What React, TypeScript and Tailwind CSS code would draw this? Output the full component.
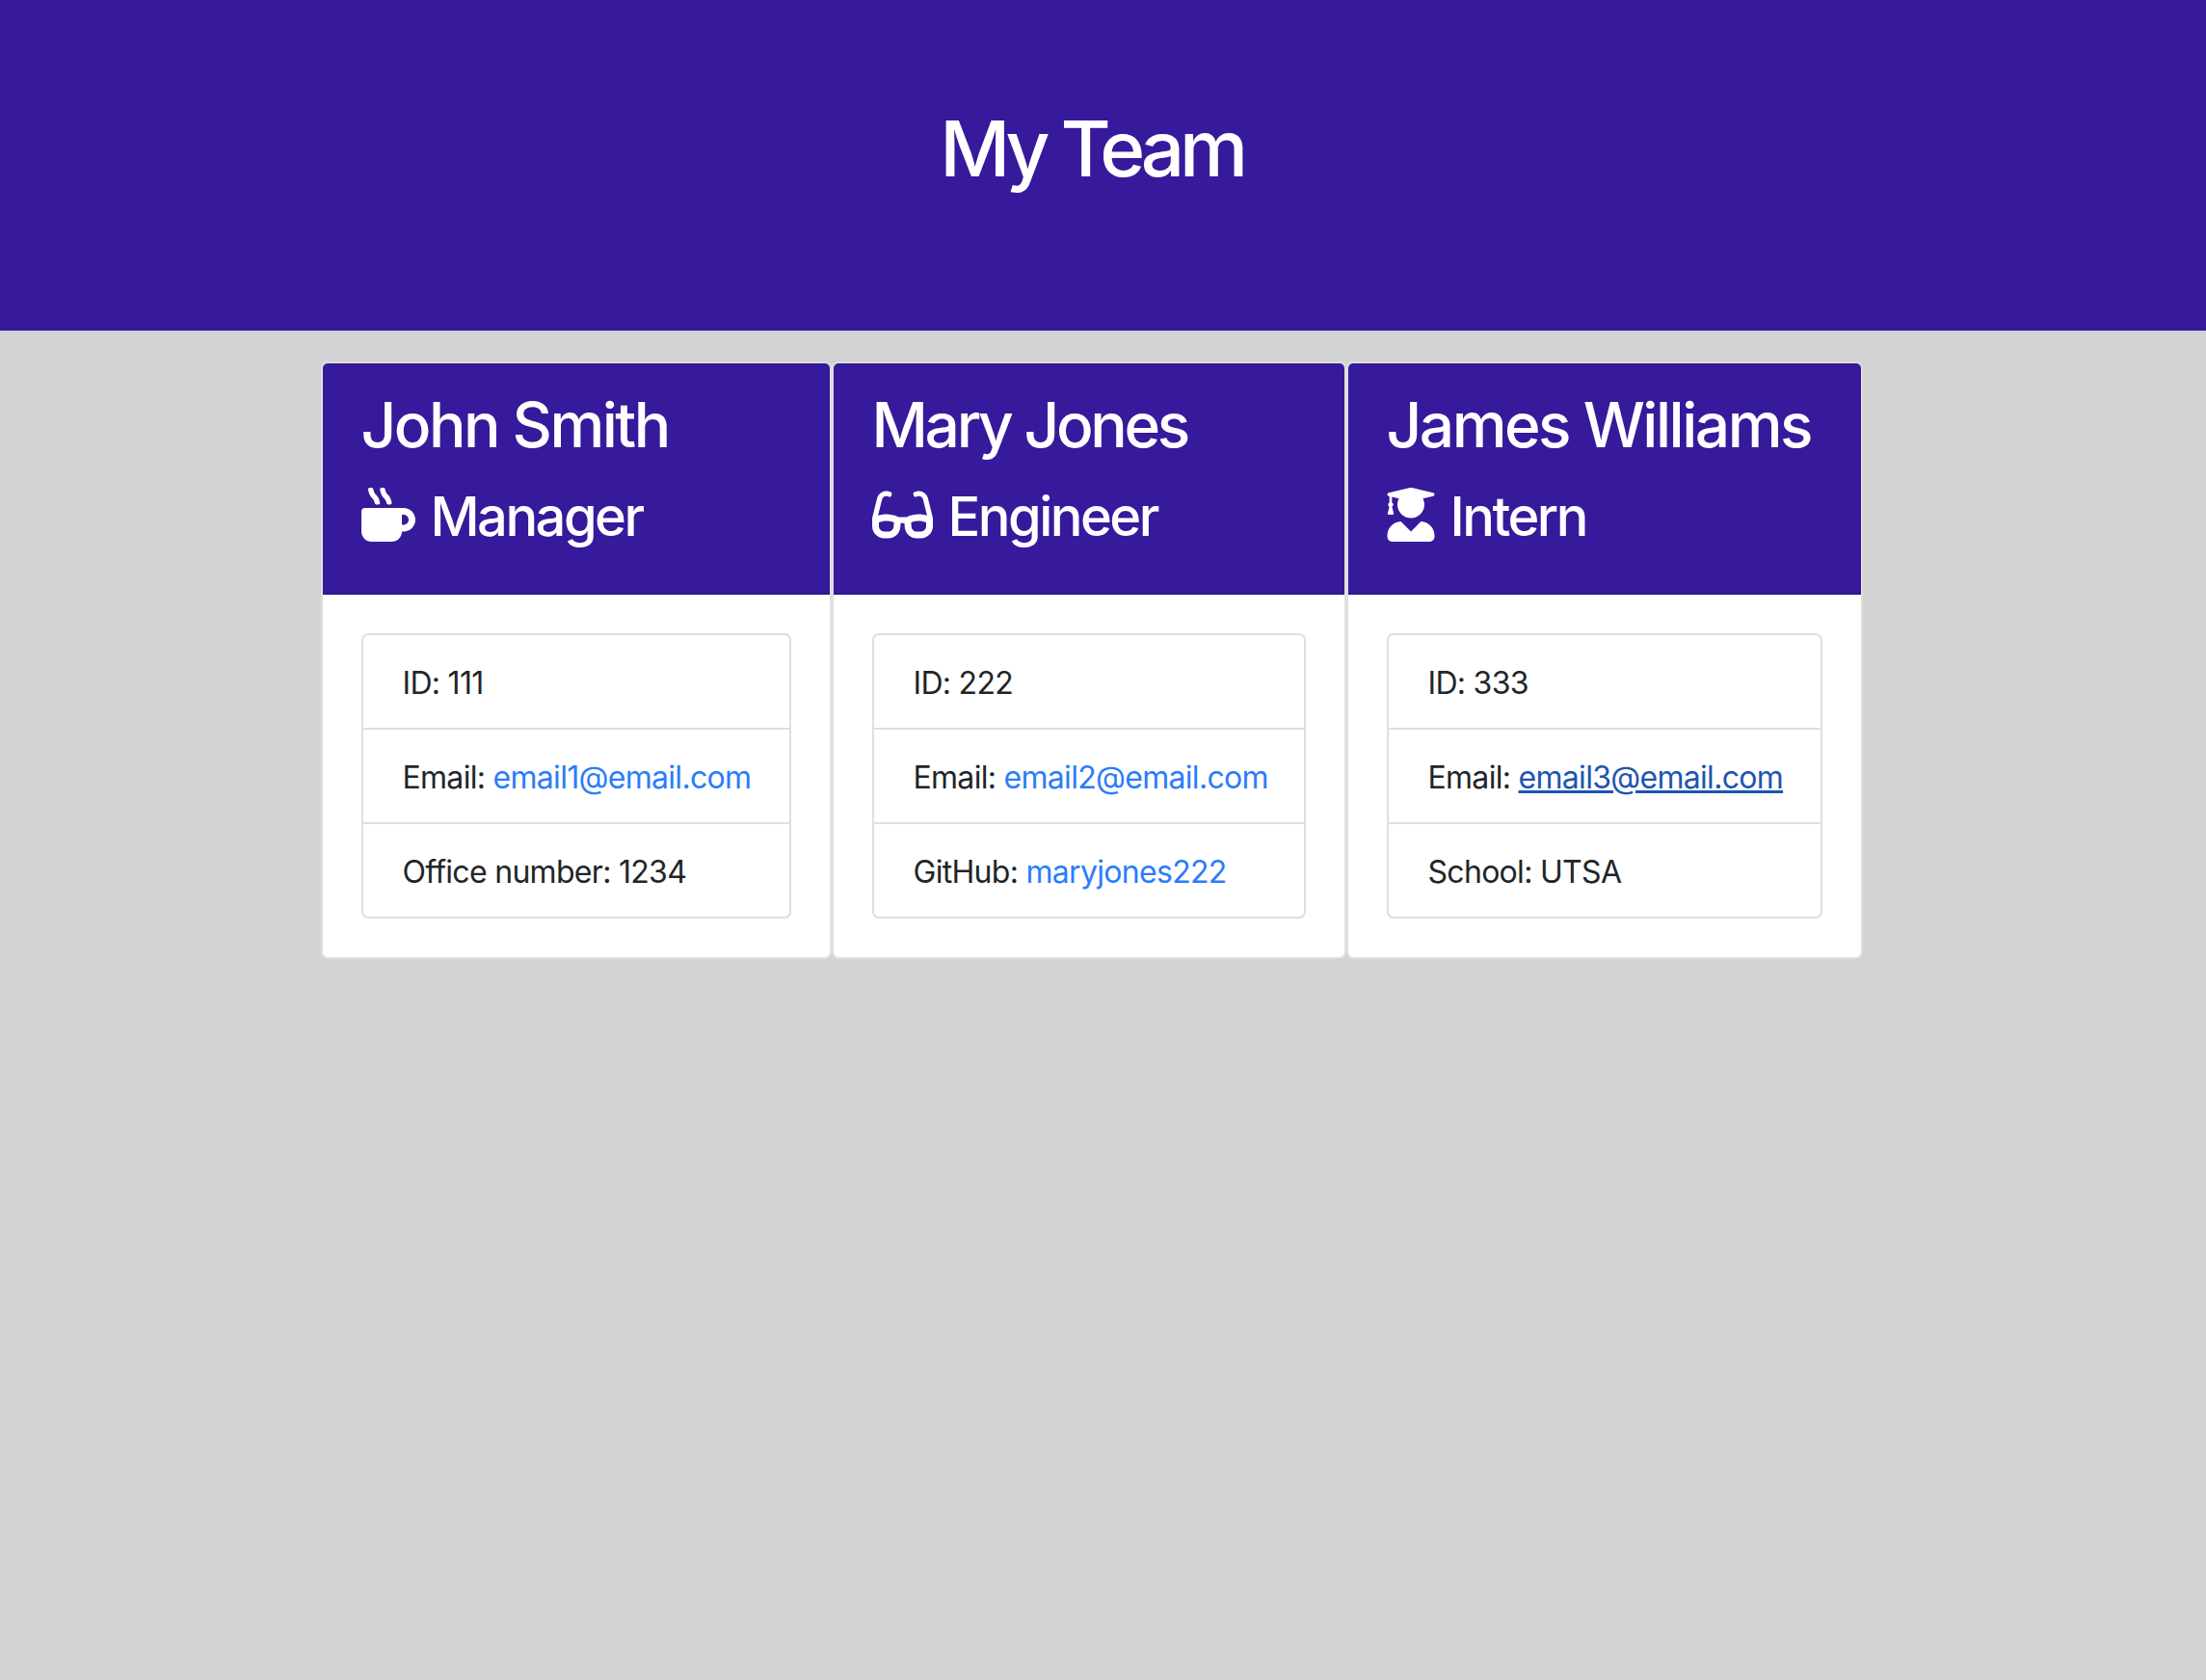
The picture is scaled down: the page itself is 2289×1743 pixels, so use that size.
import React from "react";
import { FaMugHot, FaGlasses, FaUserGraduate } from "react-icons/fa";

const members = [
  {
    name: "John Smith",
    nameClass: "tracking-[-2.5px]",
    role: "Manager",
    icon: <FaMugHot className="mb-[5px] h-[56px] w-[56px]" />,
    width: "w-[530px]",
    id: "111",
    email: "email1@email.com",
    emailClass: "text-[#2b7cfb]",
    label: "Office number: ",
    value: "1234",
  },
  {
    name: "Mary Jones",
    nameClass: "tracking-[-3.3px]",
    role: "Engineer",
    icon: <FaGlasses className="mb-[5px] h-[56px] w-[63px]" />,
    width: "w-[534px]",
    id: "222",
    email: "email2@email.com",
    emailClass: "text-[#2b7cfb]",
    label: "GitHub: ",
    link: "maryjones222",
  },
  {
    name: "James Williams",
    nameClass: "tracking-[-2.5px]",
    role: "Intern",
    icon: <FaUserGraduate className="mb-[5px] h-[56px] w-[50px]" />,
    width: "w-[536px]",
    id: "333",
    email: "email3@email.com",
    emailClass: "text-[#1c55b0] underline",
    label: "School: ",
    value: "UTSA",
  },
];

export default function App() {
  return (
    <div className="min-h-[1743px] bg-[#d3d3d3] font-['Inter',sans-serif] text-[#212529]">
      <header className="h-[343px] bg-[#37199b] pr-[24px] pt-[106px] text-center">
        <h1 className="text-[80px] leading-[96px] font-[530] tracking-[-5.2px] text-white">My Team</h1>
      </header>

      <main className="flex justify-center pr-[24px] pt-[32px]">
        {members.map((m) => (
          <div key={m.name} className={`${m.width} rounded-[7px] border-2 border-[#dfdfdf] bg-white`}>
            <div className="h-[240px] rounded-t-[5px] border-b-2 border-[#311689] bg-[#37199b] px-[40px] pt-[24px] text-white">
              <h2 className={`text-[64px] leading-[80px] font-[530] whitespace-nowrap ${m.nameClass}`}>{m.name}</h2>
              <h3 className="mt-[21px] flex items-center gap-[16px] text-[56px] leading-[68px] font-[530] tracking-[-2.5px]">
                {m.icon}
                {m.role}
              </h3>
            </div>
            <div className="p-[40px]">
              <ul className="rounded-[7px] border-2 border-[#dfdfdf] text-[32px] leading-[48px] tracking-[-0.7px]">
                <li className="h-[96px] pl-[41px] pr-[30px] pt-[26px]">ID: {m.id}</li>
                <li className="h-[98px] border-t-2 border-[#dfdfdf] pl-[41px] pr-[30px] pt-[26px]">
                  Email: <a className={m.emailClass}>{m.email}</a>
                </li>
                <li className="h-[98px] border-t-2 border-[#dfdfdf] pl-[41px] pr-[30px] pt-[26px]">
                  {m.label}
                  {m.link ? <a className="text-[#2b7cfb]">{m.link}</a> : m.value}
                </li>
              </ul>
            </div>
          </div>
        ))}
      </main>
    </div>
  );
}
